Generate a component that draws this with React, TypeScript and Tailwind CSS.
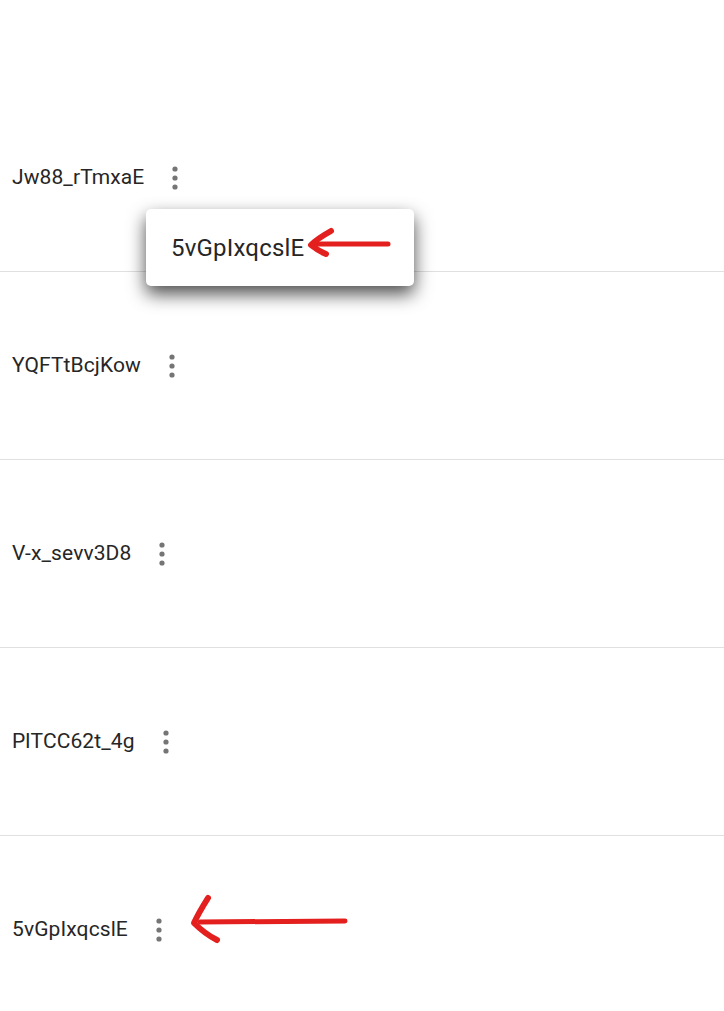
import React from 'react';

const ids = ['Jw88_rTmxaE', 'YQFTtBcjKow', 'V-x_sevv3D8', 'PlTCC62t_4g', '5vGpIxqcslE'];

const MoreDots: React.FC = () => (
  <svg width="24" height="28" viewBox="0 0 24 28" className="ml-[19px] text-[#757575]" fill="currentColor">
    <circle cx="12" cy="5" r="2.6" />
    <circle cx="12" cy="14" r="2.6" />
    <circle cx="12" cy="23" r="2.6" />
  </svg>
);

const App: React.FC = () => {
  return (
    <div className="relative w-[724px] h-[1011px] overflow-hidden bg-white font-['Roboto',sans-serif] text-[#262626]">
      <div className="h-[84px]" />
      {ids.map((id, i) => (
        <div
          key={id}
          className={`relative flex items-center h-[188px] pl-[12px] ${i < ids.length - 1 ? 'border-b border-[#e0e0e0]' : ''}`}
        >
          <span className="text-[21px] tracking-[0.1px]">{id}</span>
          <MoreDots />
          {i === 0 && (
            <div className="absolute left-[146px] top-[125px] w-[268px] h-[77px] bg-white rounded-[5px] shadow-[0_8px_18px_rgba(0,0,0,0.7)] flex items-center pl-[25px] z-10">
              <span className="text-[24px] tracking-[0.2px]">5vGpIxqcslE</span>
            </div>
          )}
        </div>
      ))}

      {/* hand-drawn red arrows */}
      <svg className="absolute inset-0 z-20 pointer-events-none" width="724" height="1011" fill="none" stroke="#e3201e" strokeLinecap="round" strokeLinejoin="round">
        <path d="M312 244 L388 244" strokeWidth="5" />
        <path d="M331 231 C322 236 315 241 311 245 C316 249 321 252 326 254" strokeWidth="6" />
        <path d="M200 922 L345 921" strokeWidth="5" />
        <path d="M208 898 C203 906 198 914 194 923 C201 930 209 936 217 940" strokeWidth="6" />
      </svg>
    </div>
  );
};

export default App;
